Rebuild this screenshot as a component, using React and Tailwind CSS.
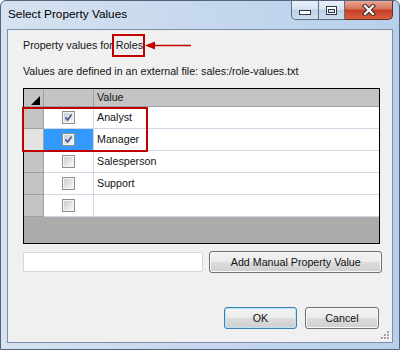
import React from "react";

const rows = [
  { label: "Analyst", checked: true },
  { label: "Manager", checked: true, current: true },
  { label: "Salesperson", checked: false },
  { label: "Support", checked: false },
  { label: "", checked: false },
];

function CheckBox({ checked }) {
  return (
    <svg width="13" height="13" viewBox="0 0 13 13">
      <defs>
        <linearGradient id="cbg" x1="0" y1="0" x2="1" y2="1">
          <stop offset="0" stopColor="#c9cdd3" />
          <stop offset="1" stopColor="#f8f8f8" />
        </linearGradient>
      </defs>
      <rect x="0.5" y="0.5" width="12" height="12" fill="#f4f4f4" stroke="#8f8f8f" />
      <rect x="2" y="2" width="9" height="9" fill="url(#cbg)" />
      {checked && (
        <path d="M3.4 6.4 L5.6 9 L9.6 3.4" fill="none" stroke="#4b5d92" strokeWidth="1.7" />
      )}
    </svg>
  );
}

function WinButton({ children, primary, className = "" }) {
  return (
    <button
      className={`flex h-[22px] items-center justify-center rounded-[3px] border bg-[linear-gradient(#f2f2f2,#ebebeb_50%,#dddddd_50%,#cfcfcf)] text-[10.7px] text-[#111] ${
        primary
          ? "border-[#3c7fb1] shadow-[inset_0_0_0_1px_#b8e2f8]"
          : "border-[#707070] shadow-[inset_0_0_0_1px_#fafafa]"
      } ${className}`}
    >
      {children}
    </button>
  );
}

export default function App() {
  return (
    <div className="h-[350px] w-[400px] bg-white font-['Liberation_Sans',Arial,sans-serif]">
      <div className="flex h-full flex-col rounded-t-[6px] border border-[#52637b] bg-linear-to-r from-[#d6e2f0] via-[#c6d8ee] to-[#b8cfeb]">
        {/* title bar */}
        <div className="flex h-[28px] shrink-0">
          <div className="pl-[7px] pt-[6px] text-[11.8px] leading-[14px] text-black">
            Select Property Values
          </div>
          <div className="ml-auto mr-[6px] flex h-[19px]">
            <div className="flex w-[54px] overflow-hidden rounded-bl-[5px] border border-t-0 border-[#5e6e85] bg-[linear-gradient(#e9f0f9,#d8e3f1_45%,#bfcfe4_50%,#cddcee)]">
              <div className="flex w-[27px] items-center justify-center border-r border-[#5e6e85] pt-[5px]">
                <svg width="12" height="5" viewBox="0 0 12 5">
                  <rect x="0.5" y="0.5" width="11" height="4" fill="#fff" stroke="#2f3a4a" />
                </svg>
              </div>
              <div className="flex flex-1 items-center justify-center">
                <svg width="11" height="9" viewBox="0 0 11 9">
                  <rect x="0.5" y="0.5" width="10" height="8" fill="#fff" stroke="#2f3a4a" />
                  <rect x="2.5" y="3.5" width="6" height="3" fill="#dbe4ef" stroke="#2f3a4a" />
                </svg>
              </div>
            </div>
            <div className="flex w-[48px] items-center justify-center rounded-br-[5px] border border-l-0 border-t-0 border-[#6b2a20] bg-[linear-gradient(#eaa796,#d87059_45%,#c43c22_50%,#d9603f)]">
              <svg width="14" height="12" viewBox="0 0 14 12">
                <path d="M3 2 L11 10 M11 2 L3 10" stroke="#3b2a2a" strokeWidth="4.2" strokeLinecap="square" />
                <path d="M3 2 L11 10 M11 2 L3 10" stroke="#fff" strokeWidth="2.2" strokeLinecap="square" />
              </svg>
            </div>
          </div>
        </div>

        {/* client area */}
        <div className="relative mx-[6px] mb-[6px] flex flex-1 flex-col border border-[#7d8fa6] bg-[#f0f0f0] pl-[15px] pr-[10px] text-[10.7px] text-[#141414]">
          <div className="mt-[4px] flex h-[22px] items-center leading-[13px]">
            <span>Property values for&nbsp;</span>
            <span className="relative">
              Roles
              <span className="absolute bottom-[-5px] left-[-4px] right-[-2px] top-[-5px] border-2 border-[#c00000]" />
            </span>
            <svg className="ml-[2px]" width="46" height="9" viewBox="0 0 46 9">
              <path d="M0 4.5 L10 0.5 L10 8.5 Z" fill="#c00000" />
              <line x1="8" y1="4.5" x2="46" y2="4.5" stroke="#c00000" strokeWidth="1.4" />
            </svg>
          </div>
          <div className="mt-[8px] h-[14px] leading-[14px]">
            Values are defined in an external file: sales:/role-values.txt
          </div>

          {/* grid */}
          <div className="relative mt-[10px] w-[357px] border border-black bg-[#ababab]">
            <div className="flex h-[18px] border-b border-[#a0a0a0] bg-[#c4c4c4]">
              <div className="relative w-[20px] border-r border-[#a0a0a0]">
                <svg className="absolute bottom-[1px] right-[3px]" width="9" height="9" viewBox="0 0 9 9">
                  <path d="M9 0 L9 9 L0 9 Z" fill="#000" />
                </svg>
              </div>
              <div className="w-[50px] border-r border-[#a0a0a0]" />
              <div className="flex flex-1 items-center pl-[3px]">Value</div>
            </div>
            {rows.map((row, i) => (
              <div key={i} className="flex h-[22px]">
                <div
                  className={`w-[20px] border-b border-r border-[#a0a0a0] ${
                    row.current ? "bg-[#e3e3e3]" : "bg-[#c4c4c4]"
                  }`}
                />
                <div
                  className={`flex w-[50px] items-center justify-center border-b border-r border-[#d0d7e5] ${
                    row.current ? "bg-[#3399ff]" : "bg-white"
                  }`}
                >
                  <CheckBox checked={row.checked} />
                </div>
                <div className="flex flex-1 items-center border-b border-[#d0d7e5] bg-white pl-[3px]">
                  {row.label}
                </div>
              </div>
            ))}
            <div className="h-[26px]" />
            <div className="absolute left-[-2px] top-[18px] h-[45px] w-[126px] border-2 border-[#c00000]" />
          </div>

          <div className="mt-[7px] flex h-[22px] items-center gap-[6px]">
            <div className="h-[20px] w-[181px] rounded-[2px] border border-[#d5d5d5] bg-white" />
            <WinButton className="w-[173px]">Add Manual Property Value</WinButton>
          </div>

          <div className="mt-[34px] flex justify-end gap-[8px] pr-[3px]">
            <WinButton primary className="w-[73px]">
              OK
            </WinButton>
            <WinButton className="w-[74px]">Cancel</WinButton>
          </div>

          <svg className="absolute bottom-[2px] right-[2px]" width="10" height="10" viewBox="0 0 10 10">
            {[
              [7, 1],
              [7, 4],
              [4, 4],
              [7, 7],
              [4, 7],
              [1, 7],
            ].map(([x, y], i) => (
              <g key={i}>
                <rect x={x + 1} y={y + 1} width="2" height="2" fill="#fff" />
                <rect x={x} y={y} width="2" height="2" fill="#a3a3a3" />
              </g>
            ))}
          </svg>
        </div>
      </div>
    </div>
  );
}
